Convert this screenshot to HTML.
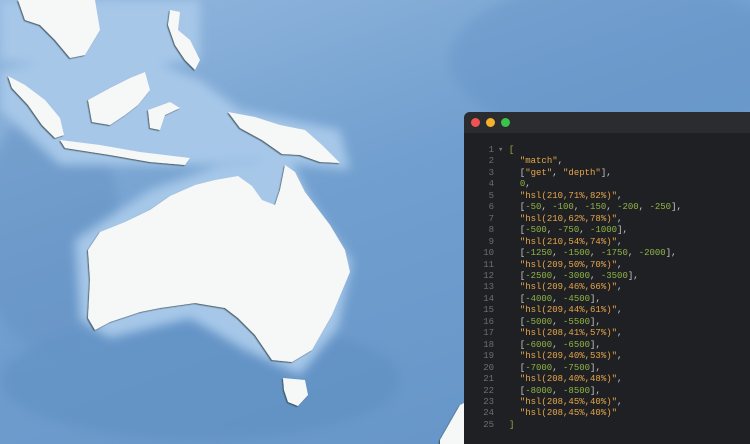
<!DOCTYPE html>
<html><head><meta charset="utf-8"><style>
html,body{margin:0;padding:0;width:750px;height:444px;overflow:hidden;background:#7fa9d3}
svg{position:absolute;left:0;top:0}
.panel{position:absolute;left:464px;top:112px;width:286px;height:332px;background:#1f2023;border-radius:6px 0 0 0;overflow:hidden}
.bar{height:21px;background:#2b2c2f;position:relative}
.dot{position:absolute;top:6px;width:9px;height:9px;border-radius:50%}
pre{margin:0;position:absolute;top:33px;left:0;font-family:"Liberation Mono",monospace;font-size:9px;line-height:11.46px;color:#c8c8c8}
.n{display:inline-block;width:30px;text-align:right;color:#6c6e72;margin-right:15px}
.s{color:#e6a64b}.d{color:#8fb446}.g{color:#6c6e72}
</style></head><body>
<svg width="750" height="444" viewBox="0 0 750 444">
<defs>
<linearGradient id="bg" x1="0" y1="0" x2="0.6" y2="1">
<stop offset="0" stop-color="#94b8de"/><stop offset="0.5" stop-color="#719fcf"/><stop offset="1" stop-color="#6796c8"/></linearGradient>
<filter id="b"><feGaussianBlur stdDeviation="5"/></filter>
<filter id="sh"><feDropShadow dx="-1" dy="1" stdDeviation="0.6" flood-color="#233" flood-opacity=".7"/></filter>
</defs>
<rect width="750" height="444" fill="url(#bg)"/>
<ellipse cx="620" cy="60" rx="170" ry="80" fill="#5f8fc3" opacity=".35" filter="url(#b)"/>
<ellipse cx="200" cy="380" rx="200" ry="60" fill="#5c8cc0" opacity=".45" filter="url(#b)"/>
<ellipse cx="50" cy="230" rx="70" ry="120" fill="#6390c2" opacity=".45" filter="url(#b)"/>
<g fill="#a6c7e8" filter="url(#b)">
<path d="M75,240 L150,190 L220,165 L290,158 L310,200 L352,262 L338,328 L300,375 L245,350 L190,318 L110,338 L80,320Z"/>
<path d="M0,70 L60,60 L150,60 L200,80 L240,110 L340,130 L350,170 L260,160 L200,165 L60,165 L0,110Z"/>
<path d="M0,0 L200,0 L200,60 L100,70 L0,60Z"/>
</g>
<g fill="#f6f7f7" filter="url(#sh)">
<path d="M285,165 L295,172 L305,192 L330,225 L345,250 L350,272 L332,315 L312,350 L292,362 L272,360 L255,335 L238,318 L225,308 L195,303 L160,308 L140,312 L110,322 L95,330 L88,318 L90,280 L88,250 L100,232 L125,222 L150,210 L170,196 L195,185 L215,180 L238,176 L252,186 L262,200 L275,205 L280,190Z"/>
<path d="M283,378 L305,380 L308,395 L298,406 L288,402 L284,390Z"/>
<path d="M228,112 L255,117 L280,125 L305,130 L322,145 L340,163 L320,162 L300,155 L282,154 L262,140 L240,128Z"/>
<path d="M88,100 L110,88 L130,78 L145,72 L150,90 L138,105 L125,115 L110,125 L92,122Z"/>
<path d="M8,76 L25,85 L45,100 L60,118 L64,135 L55,138 L42,125 L28,105 L12,88Z"/>
<path d="M60,140 L100,145 L140,152 L190,158 L185,165 L150,162 L110,155 L65,148Z"/>
<path d="M18,0 L95,0 L100,30 L85,55 L70,58 L55,40 L40,25 L25,20Z"/>
<path d="M170,10 L180,12 L178,30 L190,40 L200,60 L195,70 L185,60 L175,45 L168,25Z"/>
<path d="M148,110 L170,102 L180,108 L165,115 L160,130 L150,128Z"/>
<path d="M440,440 L460,405 L470,400 L470,444 L440,444Z"/>
</g>
</svg>
<div class="panel">
<div class="bar"><span class="dot" style="left:7px;background:#f0524f"></span><span class="dot" style="left:22px;background:#f5b32a"></span><span class="dot" style="left:37px;background:#38c54a"></span></div>
<pre><span class="n">1</span><span class="g" style="margin-left:-11px">▾ </span><span class="d">[</span>
<span class="n">2</span>  <span class="s">"match"</span>,
<span class="n">3</span>  [<span class="s">"get"</span>, <span class="s">"depth"</span>],
<span class="n">4</span>  <span class="d">0</span>,
<span class="n">5</span>  <span class="s">"hsl(210,71%,82%)"</span>,
<span class="n">6</span>  [<span class="d">-50</span>, <span class="d">-100</span>, <span class="d">-150</span>, <span class="d">-200</span>, <span class="d">-250</span>],
<span class="n">7</span>  <span class="s">"hsl(210,62%,78%)"</span>,
<span class="n">8</span>  [<span class="d">-500</span>, <span class="d">-750</span>, <span class="d">-1000</span>],
<span class="n">9</span>  <span class="s">"hsl(210,54%,74%)"</span>,
<span class="n">10</span>  [<span class="d">-1250</span>, <span class="d">-1500</span>, <span class="d">-1750</span>, <span class="d">-2000</span>],
<span class="n">11</span>  <span class="s">"hsl(209,50%,70%)"</span>,
<span class="n">12</span>  [<span class="d">-2500</span>, <span class="d">-3000</span>, <span class="d">-3500</span>],
<span class="n">13</span>  <span class="s">"hsl(209,46%,66%)"</span>,
<span class="n">14</span>  [<span class="d">-4000</span>, <span class="d">-4500</span>],
<span class="n">15</span>  <span class="s">"hsl(209,44%,61%)"</span>,
<span class="n">16</span>  [<span class="d">-5000</span>, <span class="d">-5500</span>],
<span class="n">17</span>  <span class="s">"hsl(208,41%,57%)"</span>,
<span class="n">18</span>  [<span class="d">-6000</span>, <span class="d">-6500</span>],
<span class="n">19</span>  <span class="s">"hsl(209,40%,53%)"</span>,
<span class="n">20</span>  [<span class="d">-7000</span>, <span class="d">-7500</span>],
<span class="n">21</span>  <span class="s">"hsl(208,40%,48%)"</span>,
<span class="n">22</span>  [<span class="d">-8000</span>, <span class="d">-8500</span>],
<span class="n">23</span>  <span class="s">"hsl(208,45%,40%)"</span>,
<span class="n">24</span>  <span class="s">"hsl(208,45%,40%)"</span>
<span class="n">25</span><span class="d">]</span></pre>
</div>
</body></html>
